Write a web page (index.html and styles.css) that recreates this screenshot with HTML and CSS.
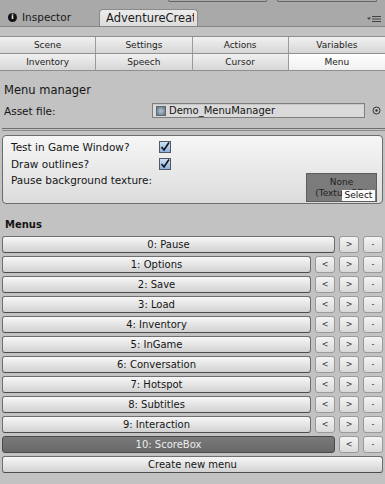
FILE: index.html
```html
<!DOCTYPE html>
<html lang="en">

<head>
    <meta charset="UTF-8">
    <meta name="viewport"
          content="width=device-width, initial-scale=1.0">
    <title>Inspector - Menu manager</title>
    <link rel="stylesheet" href="styles.css">
</head>

<body>
    <header class="tabbar">
        <div class="stubs">
            <span class="stub stub-a"></span>
            <span class="stub stub-b"></span>
        </div>
        <div class="tabs">
            <div class="tab">
                <span class="info">i</span>Inspector
            </div>
            <div class="tab active"><span class="tab-text">AdventureCreator</span></div>
            <svg class="menu-icon" width="14" height="8" viewBox="0 0 14 8">
                <path d="M0 2.5 L4 2.5 L2 5 Z" fill="#444"/>
                <rect x="5" y="1" width="9" height="1" fill="#444"/>
                <rect x="5" y="3.5" width="9" height="1" fill="#444"/>
                <rect x="5" y="6" width="9" height="1" fill="#444"/>
            </svg>
        </div>
    </header>

    <nav class="toolbar">
        <div class="tool">Scene</div>
        <div class="tool">Settings</div>
        <div class="tool">Actions</div>
        <div class="tool">Variables</div>
        <div class="tool">Inventory</div>
        <div class="tool">Speech</div>
        <div class="tool">Cursor</div>
        <div class="tool on">Menu</div>
    </nav>

    <main>
        <section class="manager">
            <h1 class="title">Menu manager</h1>
            <div class="asset">
                <span class="asset-label">Asset file:</span>
                <div class="field">
                    <span class="asset-icon"></span>Demo_MenuManager
                </div>
                <svg class="target" width="9" height="9" viewBox="0 0 9 9">
                    <circle cx="4.5" cy="4.5" r="3.5" fill="none" stroke="#333" stroke-width="1"/>
                    <circle cx="4.5" cy="4.5" r="1.2" fill="#333"/>
                </svg>
            </div>
        </section>

        <div class="separator"></div>

        <section class="box">
            <div class="opt">
                <span class="opt-label">Test in Game Window?</span>
                <span class="check">
                    <svg width="10" height="10" viewBox="0 0 10 10">
                        <path d="M1.5 5 L4 8 L9 0.5" fill="none" stroke="#111" stroke-width="1.6"/>
                    </svg>
                </span>
            </div>
            <div class="opt">
                <span class="opt-label">Draw outlines?</span>
                <span class="check">
                    <svg width="10" height="10" viewBox="0 0 10 10">
                        <path d="M1.5 5 L4 8 L9 0.5" fill="none" stroke="#111" stroke-width="1.6"/>
                    </svg>
                </span>
            </div>
            <div class="opt texture-row">
                <span class="opt-label">Pause background texture:</span>
                <div class="texture">
                    <span>None</span>
                    <span>(Texture2D)</span>
                    <span class="select">Select</span>
                </div>
            </div>
        </section>

        <h2 class="menus-title">Menus</h2>

        <ul class="menus">
            <li class="row">
                <button class="btn">0: Pause</button>
                <button class="mini">&gt;</button>
                <button class="mini">-</button>
            </li>
            <li class="row">
                <button class="btn">1: Options</button>
                <button class="mini">&lt;</button>
                <button class="mini">&gt;</button>
                <button class="mini">-</button>
            </li>
            <li class="row">
                <button class="btn">2: Save</button>
                <button class="mini">&lt;</button>
                <button class="mini">&gt;</button>
                <button class="mini">-</button>
            </li>
            <li class="row">
                <button class="btn">3: Load</button>
                <button class="mini">&lt;</button>
                <button class="mini">&gt;</button>
                <button class="mini">-</button>
            </li>
            <li class="row">
                <button class="btn">4: Inventory</button>
                <button class="mini">&lt;</button>
                <button class="mini">&gt;</button>
                <button class="mini">-</button>
            </li>
            <li class="row">
                <button class="btn">5: InGame</button>
                <button class="mini">&lt;</button>
                <button class="mini">&gt;</button>
                <button class="mini">-</button>
            </li>
            <li class="row">
                <button class="btn">6: Conversation</button>
                <button class="mini">&lt;</button>
                <button class="mini">&gt;</button>
                <button class="mini">-</button>
            </li>
            <li class="row">
                <button class="btn">7: Hotspot</button>
                <button class="mini">&lt;</button>
                <button class="mini">&gt;</button>
                <button class="mini">-</button>
            </li>
            <li class="row">
                <button class="btn">8: Subtitles</button>
                <button class="mini">&lt;</button>
                <button class="mini">&gt;</button>
                <button class="mini">-</button>
            </li>
            <li class="row">
                <button class="btn">9: Interaction</button>
                <button class="mini">&lt;</button>
                <button class="mini">&gt;</button>
                <button class="mini">-</button>
            </li>
            <li class="row">
                <button class="btn selected">10: ScoreBox</button>
                <button class="mini">&lt;</button>
                <button class="mini">-</button>
            </li>
            <li class="row">
                <button class="btn">Create new menu</button>
            </li>
        </ul>
    </main>
</body>

</html>
```

FILE: styles.css
```css
* {
    padding: 0;
    margin: 0;
    box-sizing: border-box;
}

body {
    width: 385px;
    height: 484px;
    overflow: hidden;
    background-color: #c2c2c2;
    font-family: "DejaVu Sans", sans-serif;
    font-size: 10px;
    color: #151515;
}

/* top window tabs */

.tabbar {
    height: 27px;
    background-color: #a9a9a9;
    border-bottom: 1px solid #858585;
}

.stubs {
    display: flex;
    height: 2px;
}

.stub {
    height: 2px;
    border: 1px solid #666;
    border-top: 0;
    border-radius: 0 0 3px 3px;
}

.stub-a {
    margin-left: 168px;
    width: 99px;
}

.stub-b {
    margin-left: 10px;
    width: 100px;
}

.tabs {
    display: flex;
    align-items: flex-end;
    height: 24px;
}

.tab {
    height: 17px;
    line-height: 17px;
    font-size: 10.5px;
    color: #1a1a1a;
    white-space: nowrap;
}

.tab:first-child {
    width: 95px;
    padding-left: 8px;
    display: flex;
    align-items: center;
}

.info {
    width: 9px;
    height: 9px;
    border-radius: 50%;
    background-color: #111;
    color: #fff;
    font-size: 7px;
    font-weight: bold;
    line-height: 9px;
    text-align: center;
    margin-right: 5px;
}

.tab.active {
    width: 99px;
    margin-left: 4px;
    padding: 0 3px 0 6px;
    font-size: 11.5px;
    border: 1px solid #8a8a8a;
    border-bottom: 0;
    border-radius: 4px 4px 0 0;
    background: linear-gradient(#ececec, #dcdcdc);
}

.tab-text {
    display: block;
    overflow: hidden;
}

.menu-icon {
    margin-left: auto;
    margin-right: 4px;
    margin-bottom: 3px;
}

/* manager toolbar */

.toolbar {
    margin-top: 9px;
    display: grid;
    grid-template-columns: repeat(4, 1fr);
    border-top: 1px solid #8e8e8e;
}

.tool {
    height: 17px;
    line-height: 16px;
    text-align: center;
    font-size: 9px;
    color: #222;
    background: linear-gradient(#f1f1f1, #d6d6d6);
    border-bottom: 1px solid #8f8f8f;
    border-right: 1px solid #9a9a9a;
}

.tool:nth-child(4n) {
    border-right: 0;
}

.tool.on {
    background: linear-gradient(#ffffff, #f0f0f0);
}

/* menu manager header */

.manager {
    padding: 0 4px;
}

.title {
    margin-top: 11px;
    font-size: 11.5px;
    font-weight: normal;
    line-height: 16px;
}

.asset {
    margin-top: 4px;
    height: 17px;
    display: flex;
    align-items: center;
}

.asset-label {
    width: 148px;
    font-size: 10.5px;
}

.field {
    width: 213px;
    height: 15px;
    border: 1px solid #7e7e7e;
    background-color: #dadada;
    box-shadow: inset 0 1px 0 #c8c8c8;
    display: flex;
    align-items: center;
    padding-left: 3px;
}

.asset-icon {
    width: 10px;
    height: 10px;
    margin-right: 3px;
    border: 1px solid #5c6a76;
    background: radial-gradient(circle, #a9b8c4 20%, #6d7f8e 80%);
}

.target {
    margin-left: 7px;
}

.separator {
    margin: 9px 0 0 2px;
    height: 3px;
    border-top: 1px solid #6e6e6e;
    border-bottom: 1px solid #8a8a8a;
}

/* options box */

.box {
    margin: 4px 2px 0;
    border: 1px solid #6c6c6c;
    border-radius: 4px;
    padding: 2px 5px 1px 8px;
    background: linear-gradient(#f6f6f6, #dcdcdc);
}

.opt {
    height: 17px;
    display: flex;
    align-items: center;
    font-size: 10.5px;
}

.opt-label {
    width: 148px;
    white-space: nowrap;
}

.check {
    width: 12px;
    height: 12px;
    border: 1px solid #4f5a66;
    background: linear-gradient(#cfe0f5, #8eb0dc);
    display: flex;
    align-items: center;
    justify-content: center;
}

.texture-row {
    height: 30px;
    align-items: flex-start;
}

.texture-row .opt-label {
    margin-top: 2px;
}

.texture {
    margin-left: auto;
    margin-top: 1px;
    width: 71px;
    height: 29px;
    border: 1px solid #5e5e5e;
    background-color: #7b7b7b;
    color: #222;
    font-size: 9px;
    line-height: 11px;
    display: flex;
    flex-direction: column;
    align-items: center;
    padding-top: 3px;
    position: relative;
}

.select {
    position: absolute;
    right: 1px;
    bottom: 0;
    width: 33px;
    height: 11px;
    background-color: #fbfbfb;
    color: #111;
    text-align: center;
}

/* menus list */

.menus-title {
    margin-top: 13px;
    padding-left: 5px;
    font-size: 10px;
    line-height: 16px;
}

.menus {
    list-style: none;
    margin-top: 3px;
    padding: 0 2px;
    display: flex;
    flex-direction: column;
    gap: 3px;
}

.row {
    display: flex;
    gap: 4px;
    height: 17px;
}

.btn,
.mini {
    font-family: "DejaVu Sans", sans-serif;
    height: 17px;
    color: #151515;
    border-radius: 3px;
    line-height: 15px;
}

.btn {
    flex: 1;
    font-size: 10px;
    text-align: center;
    border: 1px solid #6e6e6e;
    border-bottom-color: #4c4c4c;
    background: linear-gradient(#f7f7f7, #d2d2d2);
}

.btn.selected {
    background: linear-gradient(#7a7a7a, #686868);
    border-color: #4a4a4a;
    color: #ececec;
}

.mini {
    width: 20px;
    font-size: 8px;
    color: #333;
    border: 1px solid #9a9a9a;
    background: linear-gradient(#f4f4f4, #dadada);
}
```
